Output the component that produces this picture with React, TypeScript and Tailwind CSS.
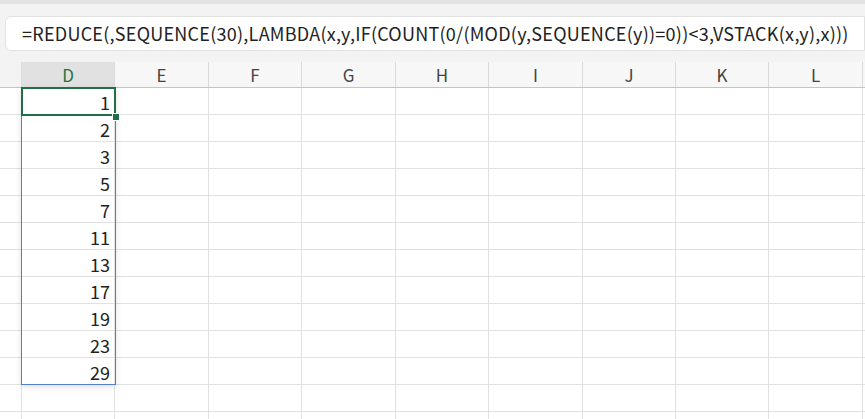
import React from "react"

const formula =
  "=REDUCE(,SEQUENCE(30),LAMBDA(x,y,IF(COUNT(0/(MOD(y,SEQUENCE(y))=0))<3,VSTACK(x,y),x)))"

const columns = ["D", "E", "F", "G", "H", "I", "J", "K", "L"]
const widths = [93, 94, 93, 94, 93, 94, 93, 93, 94]
const primes = [1, 2, 3, 5, 7, 11, 13, 17, 19, 23, 29]
const rowCount = 13

const font = { fontFamily: '"Noto Sans CJK SC", "Noto Sans", sans-serif' }

export default function App() {
  return (
    <div className="w-[865px] h-[419px] overflow-hidden bg-[#f3f3f3] relative" style={font}>
      <div className="h-[4px] bg-[#e3e3e3]" />
      {/* formula bar */}
      <div className="pt-[12px] pl-[5px]">
        <div className="h-[35px] bg-white border border-[#e1e1e1] rounded-l-md flex items-center pl-[16px] text-[18px] tracking-[0.25px] text-[#222] whitespace-nowrap">
          {formula}
        </div>
      </div>

      {/* sheet */}
      <div className="mt-[11px] relative">
        {/* header row */}
        <div className="flex h-[26px] border-b border-[#c4c4c4]">
          <div className="w-[22px] shrink-0 bg-[#f3f3f3] border-r border-[#dadada]" />
          {columns.map((c, i) => (
            <div
              key={c}
              style={{ width: widths[i] }}
              className={`shrink-0 flex items-center justify-center text-[17px] border-r border-[#dadada] ${
                i === 0 ? "bg-[#e1e1e1] text-[#217346]" : "bg-[#f7f7f7] text-[#444]"
              }`}
            >
              {c}
            </div>
          ))}
          <div className="flex-1 bg-[#f7f7f7]" />
        </div>

        {/* body */}
        <div className="bg-white">
          {Array.from({ length: rowCount }).map((_, r) => (
            <div key={r} className="flex h-[27px] border-b border-[#e1e1e1]">
              <div className="w-[22px] shrink-0 border-r border-[#e1e1e1]" />
              {columns.map((c, i) => (
                <div
                  key={c}
                  style={{ width: widths[i] }}
                  className="shrink-0 border-r border-[#e1e1e1] flex items-center justify-end pr-[4px] text-[18px] text-[#222] leading-none pt-[2px]"
                >
                  {i === 0 && primes[r] !== undefined ? primes[r] : ""}
                </div>
              ))}
              <div className="flex-1" />
            </div>
          ))}
        </div>

        {/* selected range */}
        <div className="absolute left-[21px] top-[25px] w-[95px] h-[298px] border border-[#4f7fd0] pointer-events-none shadow-[0_2px_6px_rgba(0,0,0,0.12)]" />
        {/* active cell */}
        <div className="absolute left-[21px] top-[25px] w-[95px] h-[29px] border-2 border-[#1f7145] pointer-events-none" />
        <div className="absolute left-[112px] top-[51px] w-[6px] h-[6px] bg-[#1f7145] border border-white box-content" />
      </div>
    </div>
  )
}
